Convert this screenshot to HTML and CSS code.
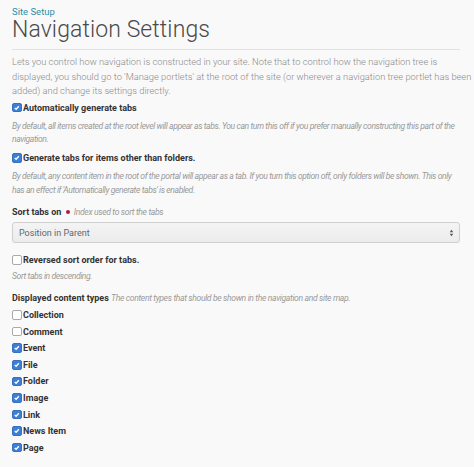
FILE: index.html
```html
<!DOCTYPE html>
<html>
<head>
<meta charset="utf-8">
<link rel="stylesheet" href="styles.css">
</head>
<body>
<div class="page">
  <div class="crumb">Site Setup</div>
  <h1 class="title">Navigation Settings</h1>
  <hr class="rule">
  <p class="intro">Lets you control how navigation is constructed in your site. Note that to control how the navigation tree is displayed, you should go to 'Manage portlets' at the root of the site (or wherever a navigation tree portlet has been added) and change its settings directly.</p>

  <div class="field f1">
    <label class="check"><span class="cb on"><svg viewBox="0 0 10 10"><path d="M2.3 5.2 L4.2 7 L7.8 3.1" /></svg></span>Automatically generate tabs</label>
    <div class="hint h1">By default, all items created at the root level will appear as tabs. You can turn this off if you prefer manually constructing this part of the navigation.</div>
  </div>

  <div class="field f2">
    <label class="check"><span class="cb on"><svg viewBox="0 0 10 10"><path d="M2.3 5.2 L4.2 7 L7.8 3.1" /></svg></span>Generate tabs for items other than folders.</label>
    <div class="hint h2">By default, any content item in the root of the portal will appear as a tab. If you turn this option off, only folders will be shown. This only has an effect if 'Automatically generate tabs' is enabled.</div>
  </div>

  <div class="field f3">
    <div class="label">Sort tabs on <span class="req"></span> <span class="inline-hint">Index used to sort the tabs</span></div>
    <div class="select">
      <span>Position in Parent</span>
      <svg class="arrows" viewBox="0 0 6 10"><path d="M3 1 L5.2 4 H0.8 Z M3 9 L5.2 6 H0.8 Z"/></svg>
    </div>
  </div>

  <div class="field f4">
    <label class="check"><span class="cb"></span>Reversed sort order for tabs.</label>
    <div class="hint h3">Sort tabs in descending.</div>
  </div>

  <div class="field f5">
    <div class="label">Displayed content types <span class="inline-hint">The content types that should be shown in the navigation and site map.</span></div>
    <ul class="types">
      <li><span class="cb"></span>Collection</li>
      <li><span class="cb"></span>Comment</li>
      <li><span class="cb on"><svg viewBox="0 0 10 10"><path d="M2.3 5.2 L4.2 7 L7.8 3.1" /></svg></span>Event</li>
      <li><span class="cb on"><svg viewBox="0 0 10 10"><path d="M2.3 5.2 L4.2 7 L7.8 3.1" /></svg></span>File</li>
      <li><span class="cb on"><svg viewBox="0 0 10 10"><path d="M2.3 5.2 L4.2 7 L7.8 3.1" /></svg></span>Folder</li>
      <li><span class="cb on"><svg viewBox="0 0 10 10"><path d="M2.3 5.2 L4.2 7 L7.8 3.1" /></svg></span>Image</li>
      <li><span class="cb on"><svg viewBox="0 0 10 10"><path d="M2.3 5.2 L4.2 7 L7.8 3.1" /></svg></span>Link</li>
      <li><span class="cb on"><svg viewBox="0 0 10 10"><path d="M2.3 5.2 L4.2 7 L7.8 3.1" /></svg></span>News Item</li>
      <li><span class="cb on"><svg viewBox="0 0 10 10"><path d="M2.3 5.2 L4.2 7 L7.8 3.1" /></svg></span>Page</li>
    </ul>
  </div>
</div>
</body>
</html>
```

FILE: styles.css
```css
html, body {
  margin: 0;
  padding: 0;
  background: #f9f9f9;
}
body {
  font-family: Roboto, "Liberation Sans", sans-serif;
  color: #333;
}
.page {
  padding: 5px 14px 0 12px;
}
.crumb {
  font-size: 9.5px;
  line-height: 14px;
  color: #2b8fa6;
}
.title {
  margin: 0;
  font-size: 23px;
  font-weight: 300;
  line-height: 22px;
  color: #4a4a4a;
  letter-spacing: 0.1px;
}
.rule {
  margin: 8px 0 0 0;
  border: 0;
  border-top: 1px solid #e2e2e2;
  height: 0;
}
.intro {
  margin: 5px -14px 0 0;
  font-size: 9.3px;
  font-weight: 300;
  line-height: 14.5px;
  color: #8a8a8a;
}
.field {
  display: flex;
  flex-direction: column;
}
.f1 { margin-top: 2px; }
.f2 { margin-top: 5px; }
.f3 { margin-top: 8px; }
.f4 { margin-top: 10px; }
.f5 { margin-top: 9px; }
.check, .label {
  display: flex;
  align-items: center;
  font-size: 9px;
  font-weight: 700;
  line-height: 14px;
  color: #333;
}
.label { display: block; }
.hint {
  font-style: italic;
  font-size: 8.6px;
  letter-spacing: -0.4px;
  line-height: 13px;
  color: #9a9a9a;
}
.h1 { margin-top: 5.5px; }
.h2 { margin-top: 4px; line-height: 14px; }
.h3 { margin-top: 3px; line-height: 12px; }
.inline-hint {
  font-style: italic;
  font-weight: 400;
  font-size: 8.6px;
  letter-spacing: -0.35px;
  color: #9a9a9a;
}
.req {
  display: inline-block;
  width: 4px;
  height: 4px;
  border-radius: 50%;
  background: #b31b3f;
  vertical-align: 1px;
  margin: 0 2px;
}
.cb {
  box-sizing: border-box;
  width: 9.5px;
  height: 9.5px;
  border-radius: 2px;
  border: 1px solid #a9a9a9;
  background: #fff;
  margin-right: 1.5px;
  flex: none;
  display: inline-flex;
}
.cb.on {
  background: #3d7fd4;
  border-color: #3672c0;
}
.cb svg {
  width: 100%;
  height: 100%;
  fill: none;
  stroke: #fff;
  stroke-width: 1.8;
}
.select {
  box-sizing: border-box;
  margin-top: 3px;
  height: 21px;
  display: flex;
  align-items: center;
  justify-content: space-between;
  padding: 0 5px 0 6px;
  border: 1px solid #cfcfcf;
  border-radius: 3px;
  background: linear-gradient(#f4f4f4, #ececec);
  font-size: 9px;
  color: #666;
}
.arrows {
  width: 5px;
  height: 8px;
  fill: #555;
}
.types {
  list-style: none;
  margin: 1.7px 0 0 0;
  padding: 0;
}
.types li {
  display: flex;
  align-items: center;
  height: 16.6px;
  font-size: 9px;
  font-weight: 700;
  color: #333;
}
```
